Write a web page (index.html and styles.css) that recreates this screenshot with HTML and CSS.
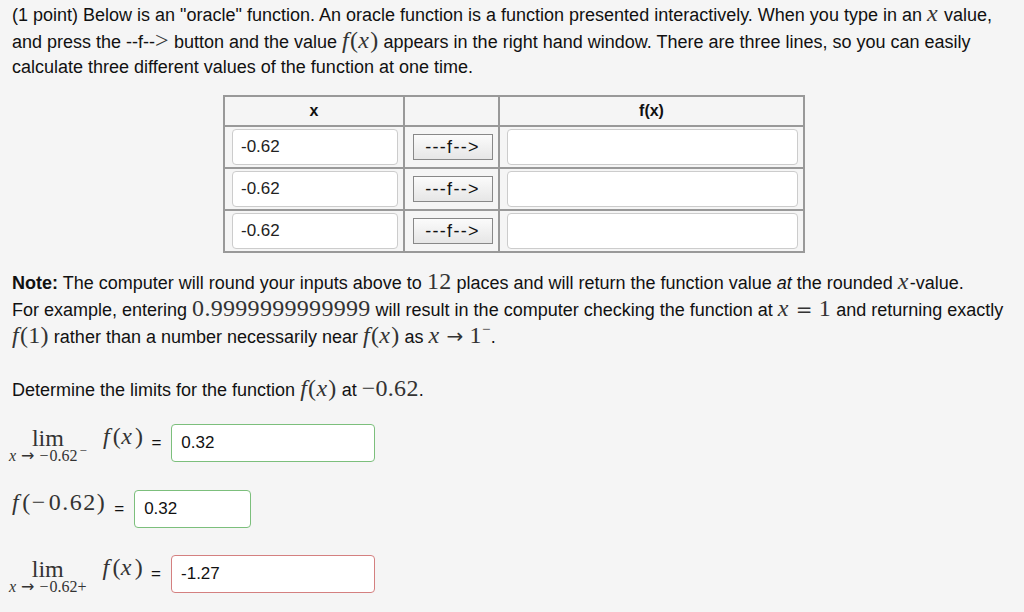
FILE: index.html
```html
<!DOCTYPE html>
<html lang="en">
<head>
<meta charset="UTF-8">
<meta name="viewport" content="width=device-width, initial-scale=1.0">
<title>Oracle Function</title>
<link rel="stylesheet" href="styles.css">
</head>
<body>
    <div class="problem">
        <p class="intro">(1 point) Below is an "oracle" function. An oracle function is a function presented interactively. When you type in an <span class="math"><i>x</i></span> value, and press the --f--<span class="math">&gt;</span> button and the value <span class="math"><i>f</i>(<i>x</i>)</span> appears in the right hand window. There are three lines, so you can easily calculate three different values of the function at one time.</p>

        <table class="oracle">
            <tr>
                <th class="col-x">x</th>
                <th class="col-btn"></th>
                <th class="col-fx">f(x)</th>
            </tr>
            <tr>
                <td class="cell-x"><input class="box" type="text" value="-0.62"></td>
                <td class="cell-btn"><button class="fbtn">---f--&gt;</button></td>
                <td class="cell-fx"><input class="box" type="text" value=""></td>
            </tr>
            <tr>
                <td class="cell-x"><input class="box" type="text" value="-0.62"></td>
                <td class="cell-btn"><button class="fbtn">---f--&gt;</button></td>
                <td class="cell-fx"><input class="box" type="text" value=""></td>
            </tr>
            <tr>
                <td class="cell-x"><input class="box" type="text" value="-0.62"></td>
                <td class="cell-btn"><button class="fbtn">---f--&gt;</button></td>
                <td class="cell-fx"><input class="box" type="text" value=""></td>
            </tr>
        </table>

        <p class="note"><b>Note:</b> The computer will round your inputs above to <span class="math">12</span> places and will return the function value <i>at</i> the rounded <span class="math"><i>x</i></span>-value.<br>For example, entering <span class="math">0.9999999999999</span> will result in the computer checking the function at <span class="math"><i>x</i><span class="rel">=</span>1</span> and returning exactly <span class="math"><i>f</i>(1)</span> rather than a number necessarily near <span class="math"><i>f</i>(<i>x</i>)</span> as <span class="math"><i>x</i><span class="rel">&rarr;</span>1<sup>&minus;</sup></span>.</p>

        <p class="task">Determine the limits for the function <span class="math"><i>f</i>(<i>x</i>)</span> at <span class="math">&minus;0.62</span>.</p>

        <div class="answers">
            <div class="answer">
                <span class="lim">
                    <span class="lim-word">lim</span>
                    <span class="lim-sub"><i>x</i><span class="arr">&rarr;</span><span class="mn">&minus;</span>0.62<sup>&minus;</sup></span>
                </span>
                <span class="math expr"><i>f</i>(<i>x</i>)</span>
                <span class="eq">=</span>
                <input class="ans correct wide" type="text" value="0.32">
            </div>
            <div class="answer">
                <span class="math expr plain"><i>f</i>(<span class="mn">&minus;</span>0.62)</span>
                <span class="eq">=</span>
                <input class="ans correct narrow" type="text" value="0.32">
            </div>
            <div class="answer">
                <span class="lim">
                    <span class="lim-word">lim</span>
                    <span class="lim-sub"><i>x</i><span class="arr">&rarr;</span><span class="mn">&minus;</span>0.62+</span>
                </span>
                <span class="math expr"><i>f</i>(<i>x</i>)</span>
                <span class="eq">=</span>
                <input class="ans wrong wide" type="text" value="-1.27">
            </div>
        </div>
    </div>
</body>
</html>
```

FILE: styles.css
```css
body {
    margin: 0;
    padding: 0;
    background-color: #f5f5f5;
    color: #111;
    font-family: "Liberation Sans", Arial, sans-serif;
    font-size: 18px;
}
.problem {
    padding: 1px 8px 0 12px;
}
p {
    margin: 0;
}
.intro {
    line-height: 25px;
}
.math {
    font-family: "Liberation Serif", "Times New Roman", serif;
    font-size: 24px;
    line-height: 1;
    letter-spacing: 0.3px;
    color: #333;
}
.math i {
    padding-right: 1px;
}
.math sup {
    font-size: 15px;
    line-height: 0;
}
.rel {
    font-family: "DejaVu Sans", sans-serif;
    font-size: 20px;
    margin: 0 6px;
}
.mn {
    padding-right: 2px;
}
.oracle {
    margin: 15px auto 0 auto;
    width: 582px;
    border-collapse: collapse;
    border: 1px solid #333;
}
.oracle th,
.oracle td {
    border: 2px solid #999;
}
.oracle th {
    height: 28px;
    font-size: 16px;
    font-weight: bold;
    text-align: center;
    padding: 0;
}
.col-x {
    width: 178px;
}
.col-btn {
    width: 93px;
}
.oracle td {
    height: 36px;
    padding: 2px 5px 2px 7px;
}
.cell-btn {
    text-align: center;
}
.box {
    box-sizing: border-box;
    width: 100%;
    height: 36px;
    border: 1px solid #ccc;
    border-radius: 4px;
    background-color: #fff;
    padding: 0 8px;
    font-family: "Liberation Sans", Arial, sans-serif;
    font-size: 17px;
    color: #222;
}
.fbtn {
    width: 80px;
    height: 26px;
    border: 1px solid #888;
    background: linear-gradient(#fbfbfb, #e6e6e6);
    font-family: "Liberation Sans", Arial, sans-serif;
    font-size: 18px;
    letter-spacing: 1.3px;
    color: #111;
    padding: 0;
}
.note {
    margin-top: 16px;
    line-height: 26px;
}
.task {
    margin-top: 26px;
    line-height: 26px;
}
.answers {
    margin-top: 21px;
    display: flex;
    flex-direction: column;
    gap: 27px;
}
.answer {
    display: flex;
    align-items: flex-start;
}
.lim {
    display: inline-flex;
    flex-direction: column;
    align-items: center;
    font-family: "Liberation Serif", "Times New Roman", serif;
    color: #333;
    margin-left: -3px;
    margin-top: 4px;
}
.lim-word {
    font-size: 24px;
    line-height: 20px;
}
.lim-sub {
    font-size: 16px;
    line-height: 15px;
}
.lim-sub i {
    padding-right: 2px;
}
.lim-sub .arr {
    font-family: "DejaVu Sans", sans-serif;
    margin: 0 5px 0 3px;
}
.lim-sub .mn {
    padding-right: 1px;
}
.lim-sub sup {
    font-size: 13px;
    line-height: 0;
    padding-left: 2px;
}
.expr {
    margin-left: 16px;
    margin-top: 0;
}
.expr i {
    padding-right: 3px;
}
.expr.plain {
    margin-left: 0;
    letter-spacing: 1.5px;
}
.expr.plain i {
    padding-right: 2px;
}
.eq {
    font-size: 17px;
    line-height: 38px;
    margin-left: 8px;
}
.ans {
    box-sizing: border-box;
    height: 38px;
    border-radius: 4px;
    background-color: #fff;
    padding: 0 9px;
    font-family: "Liberation Sans", Arial, sans-serif;
    font-size: 17px;
    color: #111;
    margin-left: 10px;
}
.wide {
    width: 204px;
}
.narrow {
    width: 117px;
}
.correct {
    border: 1px solid #7cbf7c;
}
.wrong {
    border: 1px solid #d48080;
}
```
